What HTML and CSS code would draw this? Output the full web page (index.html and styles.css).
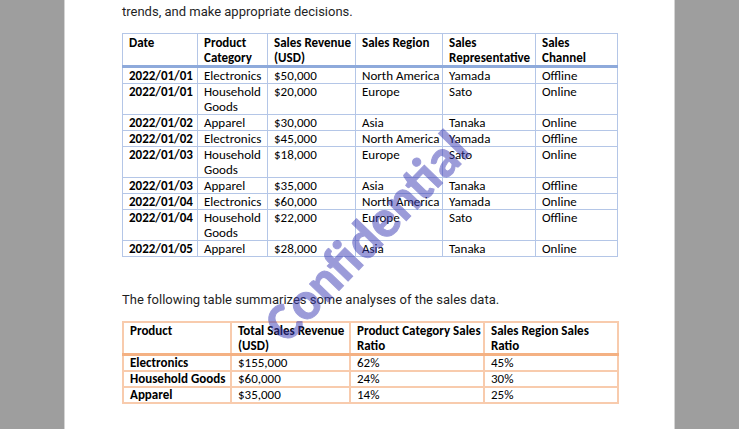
FILE: index.html
```html
<!DOCTYPE html>
<html>
<head>
<meta charset="utf-8">
<link rel="stylesheet" href="styles.css">
</head>
<body>
<div class="viewer">
  <div class="page">
    <p class="para para-top">trends, and make appropriate decisions.</p>
    <table class="tbl tbl-blue">
      <colgroup>
        <col style="width:75px"><col style="width:70px"><col style="width:88px"><col style="width:87px"><col style="width:93px"><col style="width:82px">
      </colgroup>
      <thead>
        <tr><th>Date</th><th>Product Category</th><th>Sales Revenue (USD)</th><th>Sales Region</th><th>Sales Representative</th><th>Sales Channel</th></tr>
      </thead>
      <tbody>
        <tr><td class="b">2022/01/01</td><td>Electronics</td><td>$50,000</td><td>North America</td><td>Yamada</td><td>Offline</td></tr>
        <tr><td class="b">2022/01/01</td><td>Household Goods</td><td>$20,000</td><td>Europe</td><td>Sato</td><td>Online</td></tr>
        <tr><td class="b">2022/01/02</td><td>Apparel</td><td>$30,000</td><td>Asia</td><td>Tanaka</td><td>Online</td></tr>
        <tr><td class="b">2022/01/02</td><td>Electronics</td><td>$45,000</td><td>North America</td><td>Yamada</td><td>Offline</td></tr>
        <tr><td class="b">2022/01/03</td><td>Household Goods</td><td>$18,000</td><td>Europe</td><td>Sato</td><td>Online</td></tr>
        <tr><td class="b">2022/01/03</td><td>Apparel</td><td>$35,000</td><td>Asia</td><td>Tanaka</td><td>Offline</td></tr>
        <tr><td class="b">2022/01/04</td><td>Electronics</td><td>$60,000</td><td>North America</td><td>Yamada</td><td>Online</td></tr>
        <tr><td class="b">2022/01/04</td><td>Household Goods</td><td>$22,000</td><td>Europe</td><td>Sato</td><td>Offline</td></tr>
        <tr><td class="b">2022/01/05</td><td>Apparel</td><td>$28,000</td><td>Asia</td><td>Tanaka</td><td>Online</td></tr>
      </tbody>
    </table>
    <p class="para para-mid">The following table summarizes some analyses of the sales data.</p>
    <table class="tbl tbl-orange">
      <colgroup>
        <col style="width:108px"><col style="width:119px"><col style="width:134px"><col style="width:134px">
      </colgroup>
      <thead>
        <tr><th>Product</th><th>Total Sales Revenue (USD)</th><th>Product Category Sales Ratio</th><th>Sales Region Sales Ratio</th></tr>
      </thead>
      <tbody>
        <tr><td class="b">Electronics</td><td>$155,000</td><td>62%</td><td>45%</td></tr>
        <tr><td class="b">Household Goods</td><td>$60,000</td><td>24%</td><td>30%</td></tr>
        <tr><td class="b">Apparel</td><td>$35,000</td><td>14%</td><td>25%</td></tr>
      </tbody>
    </table>
    <div class="watermark">Confidential</div>
  </div>
</div>
</body>
</html>
```
FILE: styles.css
```css
html, body {
  margin: 0;
  padding: 0;
  height: 100%;
  background: #9e9e9e;
  overflow: hidden;
}
.viewer {
  display: flex;
  justify-content: flex-start;
  padding-left: 64px;
  height: 100%;
}
.page {
  position: relative;
  width: 611px;
  height: 100%;
  background: #ffffff;
  border-left: 1px solid #d4d4d4;
  border-right: 1px solid #d4d4d4;
  padding: 0 0 0 57px;
  box-sizing: border-box;
  overflow: hidden;
}
.para {
  margin: 0;
  font-family: Roboto, "Open Sans", sans-serif;
  font-size: 13px;
  line-height: 18px;
  color: #1f1f1f;
}
.para-top {
  padding-top: 3px;
  margin-bottom: 12px;
}
.para-mid {
  margin-top: 34px;
  margin-bottom: 12px;
}
.tbl {
  border-collapse: collapse;
  table-layout: fixed;
  width: 496px;
  font-family: Carlito, Calibri, Lato, sans-serif;
  font-size: 13px;
  line-height: 15px;
  color: #000;
}
.tbl th, .tbl td {
  padding: 0 2px 0 6px;
  text-align: left;
  vertical-align: top;
  overflow: hidden;
}
.tbl th {
  font-weight: bold;
  padding-top: 1px;
  padding-bottom: 0;
}
.b { font-weight: bold; }
.tbl-blue th, .tbl-blue td { border: 1px solid #b4c6e7; }
.tbl-blue thead th { border-bottom: 3px solid #8eaadb; }
.tbl-orange th, .tbl-orange td { border: 2px solid #f8cbad; }
.tbl-orange thead th { border-bottom: 3px solid #f4b183; padding-top: 0; }
.tbl-orange td { line-height: 14px; }
.watermark {
  position: absolute;
  left: 168px;
  top: 210px;
  font-family: Carlito, Calibri, Lato, sans-serif;
  font-weight: 900;
  font-size: 53px;
  line-height: 53px;
  color: #3a3ab4;
  -webkit-text-stroke: 1px #3a3ab4;
  opacity: 0.5;
  transform: rotate(-46deg);
  transform-origin: center center;
  white-space: nowrap;
  pointer-events: none;
}
```
